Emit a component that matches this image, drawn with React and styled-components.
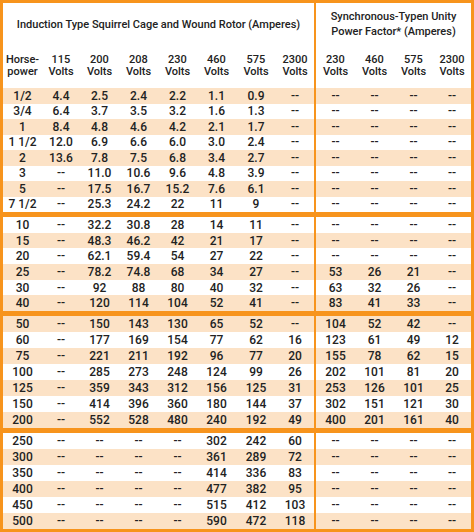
import React from 'react';
import styled, { createGlobalStyle } from 'styled-components';

const ORANGE = '#F7941D';
const STRIPE = '#FCE2C6';
const INK = '#222222';
const COLS = '39px 38px 39px 39px 39px 39px 40px 38px 41px 39px 39px 38px';

const Global = createGlobalStyle`
  html, body { margin: 0; padding: 0; background: #fff; }
  body { font-family: Roboto, "Noto Sans", sans-serif; }
`;

const Frame = styled.div`
  width: 474px;
  height: 532px;
  box-sizing: border-box;
  border: 3px solid ${ORANGE};
  display: flex;
  flex-direction: column;
  background: #fff;
  color: ${INK};
  font-size: 11px;
  font-weight: 500;
`;

const Header = styled.div`
  display: grid;
  grid-template-columns: ${COLS};
  grid-template-rows: 41px 44px;
`;

const Title = styled.div`
  grid-column: 1 / span 8;
  display: flex;
  align-items: center;
  justify-content: center;
  padding-top: 1px;
`;

const SyncTitle = styled.div`
  grid-column: 9 / span 4;
  border-left: 2px solid ${ORANGE};
  display: flex;
  align-items: center;
  justify-content: center;
  text-align: center;
  line-height: 15px;
`;

const HeadCell = styled.div`
  display: flex;
  flex-direction: column;
  align-items: center;
  justify-content: center;
  text-align: center;
  line-height: 12.5px;
  font-size: 11px;
  box-sizing: border-box;
  border-left: ${p => (p.$split ? `2px solid ${ORANGE}` : 'none')};
`;

const Group = styled.div`
  display: flex;
  flex-direction: column;
  height: ${p => p.$h}px;
`;

const Row = styled.div`
  flex: 1;
  display: grid;
  grid-template-columns: ${COLS};
  background: ${p => (p.$shade ? STRIPE : '#fff')};
`;

const Cell = styled.div`
  display: flex;
  align-items: center;
  justify-content: center;
  white-space: nowrap;
  font-size: 12px;
  box-sizing: border-box;
  border-left: ${p => (p.$split ? `2px solid ${ORANGE}` : 'none')};
`;

const Bar = styled.div`
  height: 5px;
  flex: none;
  background: ${ORANGE};
`;

const heads = [
  ['Horse-', 'power'],
  ['115', 'Volts'],
  ['200', 'Volts'],
  ['208', 'Volts'],
  ['230', 'Volts'],
  ['460', 'Volts'],
  ['575', 'Volts'],
  ['2300', 'Volts'],
  ['230', 'Volts'],
  ['460', 'Volts'],
  ['575', 'Volts'],
  ['2300', 'Volts'],
];

const D = '--';
const none4 = [D, D, D, D];

const groups = [
  {
    h: 124,
    shadeFirst: true,
    rows: [
      ['1/2', '4.4', '2.5', '2.4', '2.2', '1.1', '0.9', D, ...none4],
      ['3/4', '6.4', '3.7', '3.5', '3.2', '1.6', '1.3', D, ...none4],
      ['1', '8.4', '4.8', '4.6', '4.2', '2.1', '1.7', D, ...none4],
      ['1 1/2', '12.0', '6.9', '6.6', '6.0', '3.0', '2.4', D, ...none4],
      ['2', '13.6', '7.8', '7.5', '6.8', '3.4', '2.7', D, ...none4],
      ['3', D, '11.0', '10.6', '9.6', '4.8', '3.9', D, ...none4],
      ['5', D, '17.5', '16.7', '15.2', '7.6', '6.1', D, ...none4],
      ['7 1/2', D, '25.3', '24.2', '22', '11', '9', D, ...none4],
    ],
  },
  {
    h: 94,
    shadeFirst: false,
    rows: [
      ['10', D, '32.2', '30.8', '28', '14', '11', D, ...none4],
      ['15', D, '48.3', '46.2', '42', '21', '17', D, ...none4],
      ['20', D, '62.1', '59.4', '54', '27', '22', D, ...none4],
      ['25', D, '78.2', '74.8', '68', '34', '27', D, '53', '26', '21', D],
      ['30', D, '92', '88', '80', '40', '32', D, '63', '32', '26', D],
      ['40', D, '120', '114', '104', '52', '41', D, '83', '41', '33', D],
    ],
  },
  {
    h: 112,
    shadeFirst: true,
    rows: [
      ['50', D, '150', '143', '130', '65', '52', D, '104', '52', '42', D],
      ['60', D, '177', '169', '154', '77', '62', '16', '123', '61', '49', '12'],
      ['75', D, '221', '211', '192', '96', '77', '20', '155', '78', '62', '15'],
      ['100', D, '285', '273', '248', '124', '99', '26', '202', '101', '81', '20'],
      ['125', D, '359', '343', '312', '156', '125', '31', '253', '126', '101', '25'],
      ['150', D, '414', '396', '360', '180', '144', '37', '302', '151', '121', '30'],
      ['200', D, '552', '528', '480', '240', '192', '49', '400', '201', '161', '40'],
    ],
  },
  {
    h: 96,
    shadeFirst: false,
    rows: [
      ['250', D, D, D, D, '302', '242', '60', ...none4],
      ['300', D, D, D, D, '361', '289', '72', ...none4],
      ['350', D, D, D, D, '414', '336', '83', ...none4],
      ['400', D, D, D, D, '477', '382', '95', ...none4],
      ['450', D, D, D, D, '515', '412', '103', ...none4],
      ['500', D, D, D, D, '590', '472', '118', ...none4],
    ],
  },
];

export default function App() {
  return (
    <>
      <Global />
      <Frame>
        <Header>
          <Title>Induction Type Squirrel Cage and Wound Rotor (Amperes)</Title>
          <SyncTitle>
            Synchronous-Typen Unity
            <br />
            Power Factor* (Amperes)
          </SyncTitle>
          {heads.map((h, i) => (
            <HeadCell key={i} $split={i === 8}>
              <span>{h[0]}</span>
              <span>{h[1]}</span>
            </HeadCell>
          ))}
        </Header>
        {groups.map((g, gi) => (
          <React.Fragment key={gi}>
            {gi > 0 && <Bar />}
            <Group $h={g.h}>
              {g.rows.map((r, ri) => (
                <Row key={ri} $shade={g.shadeFirst ? ri % 2 === 0 : ri % 2 === 1}>
                  {r.map((v, ci) => (
                    <Cell key={ci} $split={ci === 8}>
                      {v}
                    </Cell>
                  ))}
                </Row>
              ))}
            </Group>
          </React.Fragment>
        ))}
      </Frame>
    </>
  );
}
